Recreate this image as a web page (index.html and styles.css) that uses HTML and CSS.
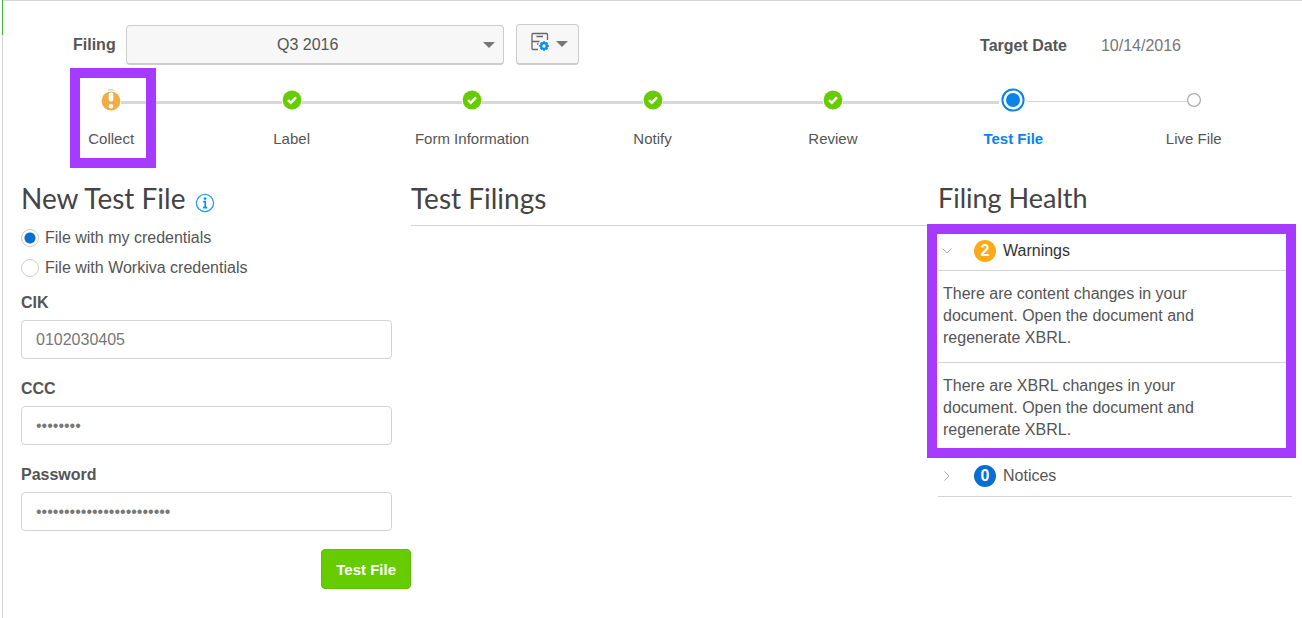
FILE: index.html
```html
<!DOCTYPE html>
<html lang="en">
<head>
    <meta charset="UTF-8">
    <meta name="viewport" content="width=device-width, initial-scale=1.0">
    <title>Test File</title>
    <link rel="stylesheet" href="styles.css">
</head>
<body>
    <div class="page">
        <!-- Filing selector -->
        <header class="filing-bar">
            <div class="filing-group">
                <label class="bar-label" for="filing">Filing</label>
                <div class="select-wrap">
                    <select id="filing" class="filing-select">
                        <option>Q3 2016</option>
                    </select>
                    <span class="caret"></span>
                </div>
            </div>
            <button class="settings-btn" type="button" aria-label="Filing settings">
                <svg width="20" height="20" viewBox="0 0 20 20" fill="none">
                    <path d="M17.5 8V2.5Q17.5 1.5 16.5 1.5H3Q2 1.5 2 2.5V16.5Q2 17.5 3 17.5H8M2 9.5H9.5M6.5 4.5H13" stroke="#666" stroke-width="1.3"/>
                    <path d="M7 12H8.5" stroke="#666" stroke-width="1.3"/>
                    <circle cx="14" cy="14" r="2.8" stroke="#0a8cf5" stroke-width="2.2"/>
                    <path d="M14 9.2V11M14 17V18.8M9.2 14H11M17 14H18.8M10.6 10.6L12 12M16 16L17.4 17.4M17.4 10.6L16 12M12 16L10.6 17.4" stroke="#0a8cf5" stroke-width="2"/>
                </svg>
                <span class="caret"></span>
            </button>
            <div class="target">
                <span class="bar-label">Target Date</span>
                <span class="target-date">10/14/2016</span>
            </div>
        </header>

        <!-- Progress steps -->
        <ol class="steps">
            <li class="step done highlight-step">
                <div class="marker">
                    <svg width="20" height="22" viewBox="0 0 20 22">
                        <path d="M7 1.2Q10 0 13 1.2" fill="none" stroke="#a4dd80"/>
                        <circle cx="10" cy="12" r="9.4" fill="#f0ad42"/>
                        <rect x="7.7" y="3.6" width="4.6" height="9" rx="2" fill="#fff"/>
                        <circle cx="10" cy="17.2" r="2.3" fill="#fff"/>
                    </svg>
                </div>
                <span>Collect</span>
            </li>
            <li class="step done">
                <div class="marker">
                    <svg width="20" height="20" viewBox="0 0 20 20">
                        <circle cx="10" cy="10" r="9.4" fill="#66cc00"/>
                        <path d="M6 10.2L8.8 12.8L14 7.4" fill="none" stroke="#fff" stroke-width="2.4"/>
                    </svg>
                </div>
                <span>Label</span>
            </li>
            <li class="step done">
                <div class="marker">
                    <svg width="20" height="20" viewBox="0 0 20 20">
                        <circle cx="10" cy="10" r="9.4" fill="#66cc00"/>
                        <path d="M6 10.2L8.8 12.8L14 7.4" fill="none" stroke="#fff" stroke-width="2.4"/>
                    </svg>
                </div>
                <span>Form Information</span>
            </li>
            <li class="step done">
                <div class="marker">
                    <svg width="20" height="20" viewBox="0 0 20 20">
                        <circle cx="10" cy="10" r="9.4" fill="#66cc00"/>
                        <path d="M6 10.2L8.8 12.8L14 7.4" fill="none" stroke="#fff" stroke-width="2.4"/>
                    </svg>
                </div>
                <span>Notify</span>
            </li>
            <li class="step done">
                <div class="marker">
                    <svg width="20" height="20" viewBox="0 0 20 20">
                        <circle cx="10" cy="10" r="9.4" fill="#66cc00"/>
                        <path d="M6 10.2L8.8 12.8L14 7.4" fill="none" stroke="#fff" stroke-width="2.4"/>
                    </svg>
                </div>
                <span>Review</span>
            </li>
            <li class="step current">
                <div class="marker">
                    <svg width="28" height="24" viewBox="0 0 28 24">
                        <circle cx="14" cy="12" r="10.6" fill="#fff" stroke="#0a84e8" stroke-width="2"/>
                        <circle cx="14" cy="12" r="7" fill="#0a84e8"/>
                    </svg>
                </div>
                <span>Test File</span>
            </li>
            <li class="step todo">
                <div class="marker">
                    <svg width="14" height="14" viewBox="0 0 14 14">
                        <circle cx="7" cy="7" r="6.4" fill="#fff" stroke="#aaa" stroke-width="1.2"/>
                    </svg>
                </div>
                <span>Live File</span>
            </li>
        </ol>

        <main class="columns">
            <!-- New test file form -->
            <form class="new-file">
                <h2>New Test File
                    <svg class="info" width="20" height="20" viewBox="0 0 20 20">
                        <circle cx="10" cy="10" r="8.6" fill="none" stroke="#2a9df4" stroke-width="1.3"/>
                        <circle cx="10" cy="5.6" r="1.3" fill="#0a8cf5"/>
                        <path d="M8.2 8.6H10.2V14.4M8 14.6H12.2" fill="none" stroke="#0a8cf5" stroke-width="1.6"/>
                    </svg>
                </h2>
                <label class="radio">
                    <input type="radio" name="credentials" checked>
                    File with my credentials
                </label>
                <label class="radio">
                    <input type="radio" name="credentials">
                    File with Workiva credentials
                </label>
                <div class="field">
                    <label for="cik">CIK</label>
                    <input type="text" id="cik" value="0102030405">
                </div>
                <div class="field">
                    <label for="ccc">CCC</label>
                    <input type="password" id="ccc" value="abcdefgh">
                </div>
                <div class="field">
                    <label for="password">Password</label>
                    <input type="password" id="password" value="abcdefghijklmnopqrstuvwx">
                </div>
                <button class="test-btn" type="button">Test File</button>
            </form>

            <!-- Test filings -->
            <section class="filings">
                <h2>Test Filings</h2>
            </section>

            <!-- Filing health -->
            <section class="health">
                <h2>Filing Health</h2>
                <div class="highlight-group">
                    <button class="health-row open" type="button" aria-expanded="true">
                        <svg width="12" height="12" viewBox="0 0 12 12">
                            <path d="M1.5 3.5L6 8L10.5 3.5" fill="none" stroke="#aaa"/>
                        </svg>
                        <span class="badge warning">2</span>
                        Warnings
                    </button>
                    <p class="message">There are content changes in your document. Open the document and regenerate XBRL.</p>
                    <p class="message">There are XBRL changes in your document. Open the document and regenerate XBRL.</p>
                </div>
                <button class="health-row" type="button" aria-expanded="false">
                    <svg width="12" height="12" viewBox="0 0 12 12">
                        <path d="M3.5 1.5L8 6L3.5 10.5" fill="none" stroke="#aaa"/>
                    </svg>
                    <span class="badge notice">0</span>
                    Notices
                </button>
            </section>
        </main>
    </div>
</body>
</html>
```

FILE: styles.css
```css
*, *::before, *::after {
    box-sizing: border-box;
}
body {
    margin: 0;
    font-family: "Liberation Sans", Arial, sans-serif;
    font-size: 16px;
    line-height: 22px;
    color: #555;
    background-color: #fff;
}
button, input, select {
    font-family: inherit;
    font-size: 16px;
}
.page {
    position: relative;
    min-height: 100vh;
    margin-left: 2px;
    border-left: 1px solid #d4d4d4;
    border-top: 1px solid #d4d4d4;
}
.page::before {
    content: "";
    position: absolute;
    left: -1px;
    top: -1px;
    width: 1px;
    height: 35px;
    background: #3fb53f;
}
h2 {
    margin: 0;
    font-family: Lato, sans-serif;
    font-size: 28px;
    font-weight: 400;
    line-height: 36px;
    color: #444;
}

/* filing bar */
.filing-bar {
    display: flex;
    align-items: flex-end;
    gap: 12px;
    padding: 23px 121px 0 70px;
}
.filing-group {
    display: flex;
    align-items: center;
    gap: 10px;
}
.bar-label {
    font-weight: bold;
}
.select-wrap {
    position: relative;
    width: 378px;
}
.filing-select {
    display: block;
    width: 100%;
    height: 40px;
    padding: 0 20px 1px 6px;
    appearance: none;
    text-align-last: center;
    color: #555;
}
.filing-select, .settings-btn {
    background-color: #f7f7f7;
    border: 1px solid #ccc;
    border-bottom: 2px solid #ccc;
    border-radius: 4px;
}
.caret {
    border-left: 6px solid transparent;
    border-right: 6px solid transparent;
    border-top: 6px solid #777;
}
.select-wrap .caret {
    position: absolute;
    right: 9px;
    top: 17px;
    pointer-events: none;
}
.settings-btn {
    display: flex;
    align-items: center;
    gap: 6px;
    width: 63px;
    height: 41px;
    padding: 0 8px 0 13px;
}
.settings-btn svg {
    margin-bottom: 4px;
}
.target {
    display: flex;
    gap: 34px;
    margin-left: auto;
    padding-bottom: 8px;
}
.target-date {
    color: #777;
}

/* steps */
.steps {
    display: grid;
    grid-template-columns: repeat(7, 1fr);
    margin: 0;
    padding: 21px 18px 0;
    list-style: none;
    font-size: 15px;
}
.step {
    position: relative;
    text-align: center;
}
.marker {
    display: flex;
    align-items: center;
    height: 28px;
    margin-bottom: 14px;
}
.marker::before, .marker::after {
    content: "";
    flex: 1;
    height: 3px;
    margin-top: 4px;
    background: #d8d8d8;
}
.step:first-child .marker::before, .step:last-child .marker::after {
    background: none;
}
.current .marker::after, .todo .marker::before {
    height: 1px;
    margin-top: 2px;
}
.current {
    font-weight: bold;
    color: #0a84e8;
}
.highlight-step::after {
    content: "";
    position: absolute;
    top: -18px;
    left: calc(50% - 41px);
    width: 86px;
    height: 100px;
    border: 10px solid #a63aff;
}

/* columns */
.columns {
    display: grid;
    grid-template-columns: 390fr 527fr 354fr;
    padding: 30px 10px 0 18px;
}
.new-file h2 {
    margin-bottom: 7px;
}
.info {
    margin-left: 2px;
    vertical-align: -4px;
}
.radio {
    display: flex;
    align-items: center;
    gap: 6px;
    height: 30px;
}
.radio input {
    appearance: none;
    width: 18px;
    height: 18px;
    margin: 0;
    border: 1px solid #ccc;
    border-radius: 50%;
}
.radio input:checked {
    background: radial-gradient(circle, #0a6ed1 5px, #fff 6px);
}
.field {
    margin: 0 19px 22px 0;
}
.new-file .radio + .field {
    margin-top: 12px;
}
.field label {
    display: block;
    margin-bottom: 9px;
    font-weight: bold;
    line-height: 16px;
}
.field input {
    display: block;
    width: 100%;
    height: 39px;
    padding: 0 14px;
    border: 1px solid #d4d4d4;
    border-radius: 4px;
    color: #777;
}
.test-btn {
    display: block;
    height: 40px;
    margin: -4px 0 0 auto;
    padding: 0 14px;
    border: 1px solid #5fc000;
    border-radius: 4px;
    background-color: #66cc00;
    color: #fff;
    font-size: 15px;
    font-weight: bold;
}
.filings h2 {
    padding-bottom: 9px;
    border-bottom: 1px solid #d4d4d4;
}

/* filing health */
.health h2 {
    margin-bottom: 12px;
    font-size: 27px;
}
.highlight-group {
    position: relative;
}
.highlight-group::after {
    content: "";
    position: absolute;
    inset: -4px -4px -4px -11px;
    border: 10px solid #a63aff;
    pointer-events: none;
}
.health-row {
    display: flex;
    align-items: center;
    width: 100%;
    height: 43px;
    padding: 2px 3px 0;
    border: none;
    border-bottom: 1px solid #d4d4d4;
    background: none;
    color: #555;
}
.health-row.open {
    padding-top: 4px;
    color: #333;
}
.badge {
    width: 22px;
    height: 22px;
    margin: 0 7px 0 21px;
    border-radius: 50%;
    font-weight: bold;
    line-height: 22px;
    color: #fff;
}
.warning {
    background-color: #fcaa18;
}
.notice {
    background-color: #0a6ed1;
}
.message {
    margin: 0;
    padding: 12px 80px 13px 5px;
}
.message + .message {
    border-top: 1px solid #d4d4d4;
}
```
